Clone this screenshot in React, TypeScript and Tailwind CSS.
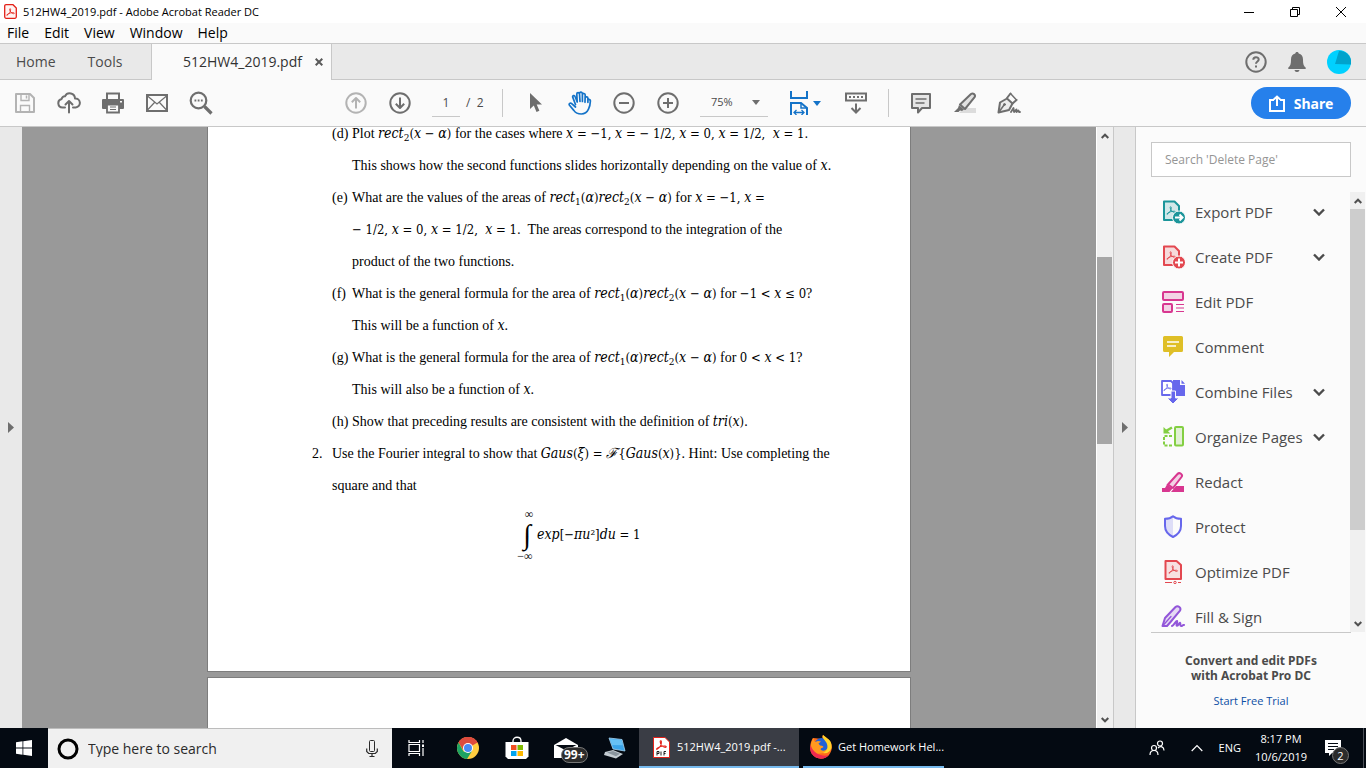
import React from "react";

type IconProps = { className?: string };

const Trefoil = ({ className }: IconProps) => (
  <path
    className={className}
    d="M1 11.5C4.500 9.800 7 6 6.800 2.200C6.700 .6 5.200 .6 5.200 2.200C5.300 5.500 8.500 9 11.600 9.200C13.400 9.200 13.200 7.700 11.600 7.500C8 7.200 4 8.500 1.600 10.300C.2 11.400 .6 12.200 1.600 11.300"
    fill="none"
    stroke="currentColor"
    strokeWidth="1.3"
    strokeLinecap="round"
  />
);

const AcrobatIcon = () => (
  <svg viewBox="0 0 13 15" className="h-[15px] w-[13px] text-[#e32119]" aria-hidden="true">
    <path d="M2 .7h7l3.300 3.300v8.800a1.500 1.500 0 0 1-1.500 1.500H2.200A1.500 1.500 0 0 1 .7 12.800V2A1.300 1.300 0 0 1 2 .7Z" fill="#fff4f3" stroke="currentColor" strokeWidth="1.3" />
    <g transform="translate(2.400 4) scale(.62)"><Trefoil /></g>
  </svg>
);

const SaveIcon = () => (
  <svg viewBox="0 0 20 20" className="size-5" fill="none" stroke="#b3b3b3" strokeWidth="2" aria-hidden="true">
    <path d="M1 1h14l4 4v14H1Z" strokeLinejoin="round" />
    <path d="M6 1v6.500h8V1M5.500 19v-6.500h9V19" strokeWidth="1.400" />
    <path d="M11.500 2.500v3" strokeWidth="1.500" />
  </svg>
);

const CloudIcon = () => (
  <svg viewBox="0 0 24 22" className="h-[22px] w-6" fill="none" stroke="#6e6e6e" strokeWidth="2" strokeLinecap="round" strokeLinejoin="round" aria-hidden="true">
    <path d="M8 15.500H5.500a4.300 4.300 0 0 1-.8-8.500 3 3 0 0 1 3.300-2.800A5.300 5.300 0 0 1 18 6.500a4.500 4.500 0 0 1 .7 9H16" />
    <path d="M12 20.500V9.500M8.500 12.500 12 9l3.500 3.500" />
  </svg>
);

const PrinterIcon = () => (
  <svg viewBox="0 0 22 22" className="size-[22px]" aria-hidden="true">
    <path d="M5 8V1.500h12V8" fill="#fafafa" stroke="#6e6e6e" strokeWidth="2" />
    <rect y="7" width="22" height="10" rx="1" fill="#6e6e6e" />
    <rect x="18" y="9" width="2" height="1.500" fill="#fafafa" />
    <path d="M5 12.500h12v8H5Z" fill="#fafafa" stroke="#6e6e6e" strokeWidth="1.800" />
    <path d="M8 15h6M8 17.500h6" stroke="#6e6e6e" strokeWidth="1.200" />
  </svg>
);

const MailIcon = () => (
  <svg viewBox="0 0 22 18" className="h-[18px] w-[22px]" fill="none" stroke="#6e6e6e" aria-hidden="true">
    <rect x="1" y="1" width="20" height="16" strokeWidth="2" />
    <path d="m1.500 2 9.500 8 9.500-8M1.500 16 8.500 8.500M20.500 16l-7-7.500" strokeWidth="1.200" />
  </svg>
);

const FindIcon = () => (
  <svg viewBox="0 0 24 24" className="size-6" fill="none" stroke="#6e6e6e" strokeWidth="2.200" aria-hidden="true">
    <circle cx="9.500" cy="9.500" r="7.800" />
    <path d="m15.500 15.500 7 7" strokeWidth="3.200" />
    <path d="M5.500 9.500h1.800M8.700 9.500h1.800M11.900 9.500h1.800" strokeWidth="1.800" />
  </svg>
);

const CircleIcon = ({ d, color }: { d: string; color: string }) => (
  <svg viewBox="0 0 22 22" className="size-[22px]" fill="none" stroke={color} strokeWidth="2" aria-hidden="true">
    <circle cx="11" cy="11" r="9.700" />
    <path d={d} strokeLinejoin="round" />
  </svg>
);

const CursorIcon = () => (
  <svg viewBox="0 0 14 22" className="h-[22px] w-[14px]" fill="#6e6e6e" aria-hidden="true">
    <path d="M1 1v16l3.800-3.500 2.700 6.500 2.900-1.200-2.700-6.300H13Z" />
  </svg>
);

const HandIcon = () => (
  <svg viewBox="0 0 24 24" className="size-6" fill="none" stroke="#1473c8" strokeWidth="1.700" strokeLinecap="round" strokeLinejoin="round" aria-hidden="true">
    <path d="M7.500 13.500 4.800 6.400c-.6-1.900 1.700-2.600 2.300-.9L9.200 11 8.800 3c0-1.900 2.500-1.900 2.700 0l.5 7.500M11.500 3c-.2-2.400 2.900-2.500 2.900-.2V10.500M14.400 3.600c.4-1.700 2.800-1.400 2.800.4L17 11.300M17.200 6.500c.7-1.200 2.700-.8 2.700.9v3.900M19.900 9c.9-1 2.600-.4 2.500 1-.1 3.200-.5 5.300-1.900 8.200-1.500 3.200-3.800 4.800-7.200 4.800-3.700 0-5.900-1.200-7.500-3.600L1.500 14.300c-1-1.600.9-2.900 2.200-1.700L7.500 16" />
  </svg>
);

const Caret = ({ color = "#6e6e6e" }: { color?: string }) => (
  <svg viewBox="0 0 8 5" className="h-[5px] w-2" fill={color} aria-hidden="true"><path d="M0 0h8L4 5Z" /></svg>
);

const FitIcon = () => (
  <svg viewBox="0 0 18 24" className="h-6 w-[18px]" fill="none" stroke="#1473c8" strokeWidth="2" aria-hidden="true">
    <path d="M1 0v7h16V0" />
    <path d="M1 24V12h10l6 5v7" />
    <path d="M11 12v5h6" strokeWidth="1.500" />
    <path d="M4 21.500h10M6.500 19 4 21.500 6.500 24M11.500 19l2.500 2.500-2.500 2.500" strokeWidth="1.300" />
  </svg>
);

const DockIcon = () => (
  <svg viewBox="0 0 22 22" className="size-[22px]" fill="none" stroke="#6e6e6e" strokeWidth="2" aria-hidden="true">
    <rect x="1" y="1.500" width="20" height="7" />
    <path d="M4 5h2M8 5h2M12 5h2M16 5h2" />
    <path d="M11 11.500v9M6.500 16l4.500 4.500 4.500-4.500" />
  </svg>
);

const CommentIcon = () => (
  <svg viewBox="0 0 20 21" className="h-[21px] w-5" stroke="#6e6e6e" strokeWidth="2" strokeLinejoin="round" aria-hidden="true">
    <path d="M1 1h18v14h-8l-4 4.500V15H1Z" fill="#e6e6e6" />
    <path d="M4.500 6h11M4.500 10h9" strokeWidth="1.300" />
  </svg>
);

const HighlightIcon = () => (
  <svg viewBox="0 0 23 22" className="h-[22px] w-[23px]" strokeLinejoin="round" aria-hidden="true">
    <path d="M10 16h12v5H5Z" fill="#dcdcdc" />
    <path d="M6 12.500 17 2c2-1.500 5 .8 3.600 3.200L11 17Z" fill="#e1e1e1" stroke="#6e6e6e" strokeWidth="2" />
    <path d="m5 13 5 4.500L8 19l-2-.5L4.500 20H0l4-4Z" fill="#6e6e6e" />
  </svg>
);

const SignIcon = () => (
  <svg viewBox="0 0 24 22" className="h-[22px] w-6" fill="none" stroke="#6e6e6e" strokeLinejoin="round" strokeLinecap="round" aria-hidden="true">
    <path d="M1.500 20.500 3 10.500 10 6.500l5.500 5-3.500 6.500Z" fill="#ececec" strokeWidth="2" />
    <path d="M10 6 13.500 1.500M15.500 11.500l4-3.500" strokeWidth="2" />
    <path d="m13.500 1.500 6 6.500" strokeWidth="1.500" />
    <path d="m2 20 5-7" strokeWidth="1.500" />
    <circle cx="7.500" cy="12.500" r="1" fill="#6e6e6e" />
    <path d="m14 20 2.500-4 .5 4 2.500-2.500v2.500l2-1.500.5 1.500H23" strokeWidth="1.800" />
  </svg>
);

const PdfPage = ({ badge }: { badge: React.ReactNode }) => (
  <svg viewBox="0 0 23 24" className="h-6 w-[23px]" aria-hidden="true">
    <path d="M2 1.500h10.500L17 6v14H2Z" fill="currentColor" fillOpacity=".18" stroke="currentColor" strokeWidth="2" strokeLinejoin="round" />
    <g transform="translate(4.500 6) scale(.7)"><Trefoil /></g>
    <circle cx="17" cy="17.500" r="6.500" fill="currentColor" stroke="#fafafa" strokeWidth="1" />
    <g stroke="#fff" strokeWidth="2" fill="none">{badge}</g>
  </svg>
);

const ExportIcon = () => <PdfPage badge={<path d="M13 17.500h7M17.500 14.500l3 3-3 3" />} />;
const CreateIcon = () => <PdfPage badge={<path d="M13 17.500h8M17 13.500v8" />} />;

const EditIcon = () => (
  <svg viewBox="0 0 22 22" className="size-[22px]" fill="none" stroke="currentColor" strokeWidth="2" aria-hidden="true">
    <rect x="1" y="1" width="20" height="8" rx="1" fill="currentColor" fillOpacity=".2" />
    <rect x="1" y="13" width="9" height="8" rx="1" fill="currentColor" fillOpacity=".2" />
    <path d="M14 13.500h8M14 17h8M14 20.500h8" strokeWidth="1.200" />
  </svg>
);

const NoteIcon = () => (
  <svg viewBox="0 0 20 21" className="h-[21px] w-5" aria-hidden="true">
    <path d="M1.500 0h17A1.500 1.500 0 0 1 20 1.500v13a1.500 1.500 0 0 1-1.500 1.500H11l-5 5v-5H1.500A1.500 1.500 0 0 1 0 14.500v-13A1.500 1.500 0 0 1 1.500 0Z" fill="currentColor" />
    <path d="M4 6h12M4 10h9" stroke="#fff" strokeWidth="1.500" />
  </svg>
);

const CombineIcon = () => (
  <svg viewBox="0 0 24 24" className="size-6" aria-hidden="true">
    <path d="M1 1h9l2 2v12H1Z" fill="#fff" stroke="currentColor" strokeWidth="1.800" strokeLinejoin="round" />
    <path d="M12 0h7v5h5v11H12ZM20.500 0 24 3.800h-3.500Z" fill="currentColor" />
    <g transform="translate(2.500 3.500) scale(.6)"><Trefoil /></g>
    <path d="M10 11h4.500v7H18l-6 6-6-6h4Z" fill="currentColor" stroke="#fafafa" strokeWidth="1" />
  </svg>
);

const OrganizeIcon = () => (
  <svg viewBox="0 0 22 21" className="h-[21px] w-[22px]" fill="none" stroke="currentColor" strokeWidth="2" aria-hidden="true">
    <rect x="13" y="1" width="8" height="18.500" rx="1" fill="currentColor" fillOpacity=".2" />
    <path d="M10 10H2v9.500h8" strokeDasharray="3 1.500" />
    <path d="M10 1.500 4 5" strokeWidth="2.500" />
    <path d="M1.500 1v6.500h7Z" fill="currentColor" stroke="none" />
  </svg>
);

const RedactIcon = () => (
  <svg viewBox="0 0 22 20" className="h-5 w-[22px]" aria-hidden="true">
    <path d="M6 12.500 15.500 2c2-2.200 5.800.5 4 3L11 16Z" fill="currentColor" fillOpacity=".2" stroke="currentColor" strokeWidth="2" />
    <path d="M14 14h8v6H9ZM5 12.500l5.500 4L7.500 20H0v-4h3Z" fill="currentColor" />
  </svg>
);

const ShieldIcon = () => (
  <svg viewBox="0 0 18 23" className="h-[23px] w-[18px]" aria-hidden="true">
    <path d="M9 1v21C4 19.500 1 16 1 11V4c3 0 6-1 8-3Z" fill="currentColor" fillOpacity=".2" />
    <path d="M9 1.200c2 1.800 5 2.600 8 2.600V11c0 5-3 8.500-8 11-5-2.500-8-6-8-11V3.800c3 0 6-.8 8-2.600Z" fill="none" stroke="currentColor" strokeWidth="2" strokeLinejoin="round" />
  </svg>
);

const OptimizeIcon = () => (
  <svg viewBox="0 0 18 24" className="h-6 w-[18px]" aria-hidden="true">
    <path d="M1.500 1h11L17 5v14H1.500Z" fill="currentColor" fillOpacity=".15" stroke="currentColor" strokeWidth="2" strokeLinejoin="round" />
    <g transform="translate(4.500 5) scale(.7)"><Trefoil /></g>
    <path d="M1 22.500h7M14 22.500h3" stroke="currentColor" />
    <circle cx="11" cy="22.500" r="1.200" fill="none" stroke="currentColor" />
  </svg>
);

const FillSignIcon = () => (
  <svg viewBox="0 0 24 23" className="h-[23px] w-6" stroke="currentColor" strokeLinejoin="round" strokeLinecap="round" aria-hidden="true">
    <path d="M1.500 21 4 13 14.500 2c2.500-2 6.300 1 4.300 3.800L9.500 17 6 21Z" fill="currentColor" fillOpacity=".2" strokeWidth="2" />
    <path d="m2 20.500 8-9" strokeWidth="1.300" />
    <path d="M11 21c2-.5 4-5.500 5-5s-1.500 4.500 0 4.800 2-3.300 3-3-.5 3 1 3.200 1.500-1.500 3-1" fill="none" strokeWidth="2" />
  </svg>
);

const Chevron = () => (
  <svg viewBox="0 0 12 8" className="h-2 w-3" fill="none" stroke="#4b4b4b" strokeWidth="2.400" aria-hidden="true"><path d="m1 1.500 5 5 5-5" /></svg>
);

const SmallChevron = ({ up = false }: { up?: boolean }) => (
  <svg viewBox="0 0 8 6" className="h-1.5 w-2" fill="none" stroke="#505050" strokeWidth="2" aria-hidden="true">
    <path d={up ? "M.7 5 4 1.700 7.300 5" : "M.7 1 4 4.300 7.300 1"} />
  </svg>
);

const tools = [
  { label: "Export PDF", Icon: ExportIcon, color: "text-[#1b959a]", more: true },
  { label: "Create PDF", Icon: CreateIcon, color: "text-[#e34850]", more: true },
  { label: "Edit PDF", Icon: EditIcon, color: "text-[#d83790]", more: false },
  { label: "Comment", Icon: NoteIcon, color: "text-[#dfbf27]", more: false },
  { label: "Combine Files", Icon: CombineIcon, color: "text-[#6767ec]", more: true },
  { label: "Organize Pages", Icon: OrganizeIcon, color: "text-[#83cf42]", more: true },
  { label: "Redact", Icon: RedactIcon, color: "text-[#d83790]", more: false },
  { label: "Protect", Icon: ShieldIcon, color: "text-[#6767ec]", more: false },
  { label: "Optimize PDF", Icon: OptimizeIcon, color: "text-[#e34850]", more: false },
  { label: "Fill & Sign", Icon: FillSignIcon, color: "text-[#9256d9]", more: false },
];

const TitleBar = () => (
  <header className="flex h-[23px] shrink-0 items-center bg-white pr-0.5 pl-1 text-black">
    <AcrobatIcon />
    <h1 className="ml-1.5 text-[11px] leading-4">512HW4_2019.pdf - Adobe Acrobat Reader DC</h1>
    <div className="ml-auto flex">
      <button type="button" aria-label="Minimize" className="flex h-5 w-[46px] items-center justify-center">
        <svg viewBox="0 0 10 10" className="size-2.5" stroke="#000"><path d="M0 5.500h10" /></svg>
      </button>
      <button type="button" aria-label="Restore" className="flex h-5 w-[46px] items-center justify-center">
        <svg viewBox="0 0 10 10" className="size-2.5" stroke="#000" fill="none"><path d="M.5 2.500h7v7h-7ZM2.500 2.500v-2h7v7h-2" /></svg>
      </button>
      <button type="button" aria-label="Close" className="flex h-5 w-[46px] items-center justify-center">
        <svg viewBox="0 0 10 10" className="size-2.5" stroke="#000"><path d="m0 0 10 10M10 0 0 10" /></svg>
      </button>
    </div>
  </header>
);

const MenuBar = () => (
  <nav aria-label="Menu" className="flex h-5 shrink-0 items-center gap-[15px] bg-[#fafafa] pl-[7px] text-[14px] leading-5 text-black">
    {["File", "Edit", "View", "Window", "Help"].map((m) => (
      <button type="button" key={m}>{m}</button>
    ))}
  </nav>
);

const TabBar = () => (
  <div className="flex h-[37px] shrink-0 border-y border-[#c8c8c8] bg-[#e9e9e9] text-[14px] leading-5 text-[#4b4b4b]">
    <div className="flex w-[151px] items-center gap-8 pl-4">
      <button type="button">Home</button>
      <button type="button">Tools</button>
    </div>
    <div className="-mb-px flex w-[181px] items-center justify-between border-x border-[#c8c8c8] bg-[#fafafa] pr-2 pl-[31px]">
      <button type="button" className="text-[#323232]">512HW4_2019.pdf</button>
      <button type="button" aria-label="Close tab">
        <svg viewBox="0 0 8 8" className="size-2" stroke="#5a5a5a" strokeWidth="2"><path d="m.7.7 6.600 6.600M7.300.7.7 7.300" /></svg>
      </button>
    </div>
    <div className="ml-auto flex items-center gap-[21px] pr-[15px]">
      <button type="button" aria-label="Help">
        <svg viewBox="0 0 22 22" className="size-[22px]" fill="none" stroke="#6e6e6e" strokeWidth="2">
          <circle cx="11" cy="11" r="9.700" />
          <path d="M8.300 8.800c0-3.400 5.400-3.400 5.400-.3 0 2-2.700 1.900-2.700 4.200M11 14.500v2" />
        </svg>
      </button>
      <button type="button" aria-label="Notifications">
        <svg viewBox="0 0 18 20" className="h-5 w-[18px]" fill="#6e6e6e">
          <path d="M9 0c1 0 1.700.6 1.700 1.600C13.500 2.300 15 4.500 15 7.500c0 4.500.7 6.500 2.700 8V17H.3v-1.500c2-1.500 2.700-3.500 2.700-8 0-3 1.500-5.200 4.300-5.900C7.300.6 8 0 9 0ZM6.500 18h5c-.5 2.700-4.500 2.700-5 0Z" />
        </svg>
      </button>
      <button type="button" aria-label="Account">
        <svg viewBox="0 0 24 24" className="size-6"><circle cx="12" cy="12" r="12" fill="#00d1ff" /><path d="M12 1h2a11.500 11.500 0 0 1 10 13.500L8 14Z" fill="#00a3cc" /></svg>
      </button>
    </div>
  </div>
);

const ToolButton = ({ label, children }: { label: string; children: React.ReactNode }) => (
  <button type="button" aria-label={label} className="flex h-11 w-11 items-center justify-center">{children}</button>
);

const Toolbar = () => (
  <div className="flex h-[47px] shrink-0 items-center border-b border-[#c8c8c8] bg-[#fafafa] pl-[3px] text-[12px] text-[#4b4b4b]">
    <ToolButton label="Save"><SaveIcon /></ToolButton>
    <ToolButton label="Upload"><CloudIcon /></ToolButton>
    <ToolButton label="Print"><PrinterIcon /></ToolButton>
    <ToolButton label="Email"><MailIcon /></ToolButton>
    <ToolButton label="Find"><FindIcon /></ToolButton>
    <div className="ml-[111px] flex items-center">
      <ToolButton label="Previous page"><CircleIcon color="#b3b3b3" d="M11 16.500V6M6.800 10.200 11 6l4.200 4.200" /></ToolButton>
      <ToolButton label="Next page"><CircleIcon color="#6e6e6e" d="M11 5.500V16M6.800 11.800 11 16l4.200-4.200" /></ToolButton>
      <input aria-label="Page number" defaultValue="1" className="ml-2.5 h-[27px] w-7 border-b border-[#c8c8c8] bg-transparent text-center" />
      <span className="ml-1.5 w-9">/&nbsp; 2</span>
      <span className="mr-[11px] h-7 w-px bg-[#c8c8c8]" />
      <ToolButton label="Select"><CursorIcon /></ToolButton>
      <ToolButton label="Hand"><HandIcon /></ToolButton>
      <ToolButton label="Zoom out"><CircleIcon color="#6e6e6e" d="M6 11h10" /></ToolButton>
      <ToolButton label="Zoom in"><CircleIcon color="#6e6e6e" d="M6 11h10M11 6v10" /></ToolButton>
      <div className="ml-2.5 flex h-[27px] w-[68px] items-center border-b border-[#c8c8c8] pr-2">
        <select aria-label="Zoom level" defaultValue="75%" className="min-w-0 flex-1 appearance-none bg-transparent pl-[11px] text-[11px]">
          <option>75%</option>
        </select>
        <Caret />
      </div>
      <button type="button" aria-label="Fit page" className="ml-[22px] flex items-center gap-[5px]"><FitIcon /><Caret color="#1473c8" /></button>
      <button type="button" aria-label="Dock toolbar" className="ml-6"><DockIcon /></button>
      <span className="mr-2.5 ml-[21px] h-7 w-px bg-[#c8c8c8]" />
      <ToolButton label="Add comment"><CommentIcon /></ToolButton>
      <ToolButton label="Highlight"><HighlightIcon /></ToolButton>
      <ToolButton label="Sign"><SignIcon /></ToolButton>
    </div>
    <button type="button" className="mr-[15px] ml-auto flex h-8 w-[100px] items-center justify-center gap-[9px] rounded-full bg-[#2680eb] font-['Noto_Sans',sans-serif] text-[14px] font-bold text-white">
      <svg viewBox="0 0 16 17" className="h-[17px] w-4" fill="none" stroke="#fff" strokeWidth="2"><path d="M5 5H1v11h14V5h-4M8 11V1.500M4.800 4.500 8 1.500l3.200 3" /></svg>
      Share
    </button>
  </div>
);

const M = ({ children }: { children: React.ReactNode }) => <i className="font-['DejaVu_Serif_Condensed','DejaVu_Serif',serif] text-[14px] leading-none">{children}</i>;
const Up = ({ children }: { children: React.ReactNode }) => <span className="font-['DejaVu_Serif_Condensed','DejaVu_Serif',serif] text-[13px] leading-none not-italic">{children}</span>;
const Sub = ({ n }: { n: string }) => <span className="relative top-[3px] text-[10px] leading-none not-italic">{n}</span>;
const X = () => <M>x</M>;
const Rect = ({ n }: { n: string }) => <M>rect<Sub n={n} /></M>;
const Shift = () => <M><Up>(</Up>x<Up> − </Up>α<Up>)</Up></M>;
const Product = () => <><Rect n="1" /><M><Up>(</Up>α<Up>)</Up></M><Rect n="2" /><Shift /></>;

const Item = ({ mark, children }: { mark: string; children: React.ReactNode }) => (
  <li className="grid grid-cols-[20px_1fr]">
    <span>{mark}</span>
    <div>{children}</div>
  </li>
);

const Document = () => (
  <article className="flex h-[544px] w-[702px] max-w-full shrink-0 flex-col overflow-hidden bg-white pl-[104px] font-['Liberation_Serif',serif] text-[14px] leading-8 whitespace-nowrap text-black shadow-[0_0_0_1px_#7d7d7d]">
    <ol className="-mt-[9px] pl-5">
      <Item mark="(d)">
        <p>Plot <Rect n="2" /><Shift /> for the cases where <X /><Up> = −1, </Up><X /><Up> = − 1/2, </Up><X /><Up> = 0, </Up><X /><Up> = 1/2,&nbsp; </Up><X /><Up> = 1.</Up></p>
        <p>This shows how the second functions slides horizontally depending on the value of <X />.</p>
      </Item>
      <Item mark="(e)">
        <p>What are the values of the areas of <Product /> for <X /><Up> = −1, </Up><X /><Up> =</Up></p>
        <p><Up>− 1/2, </Up><X /><Up> = 0, </Up><X /><Up> = 1/2,&nbsp; </Up><X /><Up> = 1.</Up>&nbsp; The areas correspond to the integration of the</p>
        <p>product of the two functions.</p>
      </Item>
      <Item mark="(f)">
        <p>What is the general formula for the area of <Product /> for <Up>−1 &lt; </Up><X /><Up> ≤ 0</Up>?</p>
        <p>This will be a function of <X />.</p>
      </Item>
      <Item mark="(g)">
        <p>What is the general formula for the area of <Product /> for <Up>0 &lt; </Up><X /><Up> &lt; 1</Up>?</p>
        <p>This will also be a function of <X />.</p>
      </Item>
      <Item mark="(h)">
        <p>Show that preceding results are consistent with the definition of <M>tri<Up>(</Up>x<Up>)</Up></M>.</p>
      </Item>
    </ol>
    <div className="grid grid-cols-[20px_1fr]">
      <span>2.</span>
      <div>
        <p>Use the Fourier integral to show that <M>Gaus<Up>(</Up>ξ<Up>) = </Up>ℱ<Up>{"{"}</Up>Gaus<Up>(</Up>x<Up>)</Up><Up>{"}"}</Up></M>. Hint: Use completing the</p>
        <p>square and that</p>
      </div>
    </div>
    <div className="mt-1.5 ml-[205px] flex items-center">
      <div className="flex w-5 flex-col items-center text-[12px] leading-[12px]">
        <span className="pl-1">∞</span>
        <span className="text-[28px] leading-[30px]">∫</span>
        <span className="pr-1">−∞</span>
      </div>
      <p><M>exp<Up>[−</Up>πu<Up>²]</Up>du<Up> = 1</Up></M></p>
    </div>
  </article>
);

const ScrollBar = ({ thumb, label }: { thumb: string; label: string }) => (
  <div role="group" aria-label={label} className="flex w-[15px] shrink-0 flex-col bg-[#f0f0f0]">
    <button type="button" aria-label="Scroll up" className="flex h-[17px] shrink-0 items-center justify-center"><SmallChevron up /></button>
    <div className="min-h-0 flex-1"><div className={thumb} /></div>
    <button type="button" aria-label="Scroll down" className="flex h-[17px] shrink-0 items-center justify-center"><SmallChevron /></button>
  </div>
);

const ToolsPane = () => (
  <aside className="flex w-[231px] shrink-0 flex-col border-l border-[#c8c8c8] bg-[#fbfbfb] text-[#4b4b4b]">
    <input type="search" aria-label="Search tools" placeholder="Search 'Delete Page'" className="mx-[15px] mt-[15px] h-[35px] shrink-0 border border-[#c8c8c8] bg-white px-[13px] text-[12px] placeholder:text-[#959595]" />
    <div className="mt-3 flex min-h-0 flex-1">
      <ul className="min-w-0 flex-1 overflow-hidden pl-6">
        {tools.map(({ label, Icon, color, more }) => (
          <li key={label}>
            <button type="button" className="flex h-[45px] w-full items-center pr-[25px] text-[15px] leading-5 whitespace-nowrap">
              <span className={`flex w-[26px] justify-center ${color}`}><Icon /></span>
              <span className="ml-[9px]">{label}</span>
              {more && <span className="ml-auto"><Chevron /></span>}
            </button>
          </li>
        ))}
      </ul>
      <div className="mr-px flex pt-[3px]">
        <ScrollBar label="Tools scroll bar" thumb="h-[79%] bg-[#cdcdcd]" />
      </div>
    </div>
    <div className="mx-[15px] flex h-24 shrink-0 flex-col items-center border-t border-[#c8c8c8] pt-5 text-center">
      <p className="w-[160px] font-['Noto_Sans',sans-serif] text-[12px] leading-[15px] font-bold">Convert and edit PDFs with Acrobat Pro DC</p>
      <a href="#trial" className="mt-2.5 text-[11px] leading-[16px] text-[#0d4fa5]">Start Free Trial</a>
    </div>
  </aside>
);

const SideHandle = ({ label }: { label: string }) => (
  <button type="button" aria-label={label} className="flex w-full items-center justify-center bg-[#e9e9e9]">
    <svg viewBox="0 0 6 11" className="h-[11px] w-1.5" fill="#6e6e6e"><path d="M0 0v11l6-5.500Z" /></svg>
  </button>
);

const ChromeIcon = () => (
  <svg viewBox="0 0 22 22" className="size-[22px]" aria-hidden="true">
    <circle cx="11" cy="11" r="11" fill="#ffcd40" />
    <path d="M11 11 1.500 5.500A11 11 0 0 1 20.500 5.500Z" fill="#dd4b3e" />
    <path d="M11 6h9.800A11 11 0 0 0 1.500 5.500L6.500 13.500Z" fill="#dd4b3e" />
    <path d="M1.500 5.500A11 11 0 0 0 10 22l5-8-8.500.5Z" fill="#1da362" />
    <circle cx="11" cy="11" r="5" fill="#fff" />
    <circle cx="11" cy="11" r="4" fill="#4a8af4" />
  </svg>
);

const StoreIcon = () => (
  <svg viewBox="0 0 24 24" className="size-6" aria-hidden="true">
    <path d="M8 8V5c0-5 8-5 8 0v3" fill="none" stroke="#fff" strokeWidth="1.300" />
    <path d="M.5 6h23v14.500L21 23H3L.5 20.500Z" fill="#fff" />
    <path d="M6 9h5.500v5H6Z" fill="#f25022" /><path d="M12.500 9H18v5h-5.500Z" fill="#7fba00" />
    <path d="M6 15h5.500v5H6Z" fill="#00a4ef" /><path d="M12.500 15H18v5h-5.500Z" fill="#ffb900" />
  </svg>
);

const PcIcon = () => (
  <svg viewBox="0 0 23 22" className="h-[22px] w-[23px]" aria-hidden="true">
    <path d="m6 1 13 1.500 3 11.500L10 12Z" fill="#3ba5ea" stroke="#a6d4f2" strokeWidth=".8" />
    <path d="m7 2 11.500 1.300 1.300 5L9 8Z" fill="#67c1f5" />
    <path d="m2 15 8-2 10 4-7 4.500L1 18Z" fill="#c4ccd2" />
    <path d="m4 15.500 6-1.500 7 2.700-4 2.500Z" fill="#8a959e" />
  </svg>
);

const FirefoxIcon = () => (
  <svg viewBox="0 0 22 24" className="h-6 w-[22px] shrink-0" aria-hidden="true">
    <path d="M3 3C0 7-1 15 2 19c4 6 13 6 17 1 4-5 4-12-1-16l-5-4c-1 1-1 3 0 4Z" fill="#ff6a1c" />
    <circle cx="11.500" cy="10" r="7" fill="#1f62d6" />
    <path d="M3 3 1 9c0 6 2 9 5 10l8-1c2-1 3-3 3-4-2 2-4 2-6 1-1-1 0-2 2-2.500 1-.5 0-2-3-2l-1.500-2L11 6.500 8 6l-3 1Z" fill="#ff9a1f" />
    <path d="M13 0c-1 3 1 4 3 7 3 5 1 9-3 11 4 1 7-1 8.500-5C22 8 20 5 18 4Z" fill="#ffd52b" />
    <path d="M.5 10c-.6 4 0 7 1.500 9 4 6 13 6 17 1-6 2-15 0-18.500-10Z" fill="#ee2a50" />
  </svg>
);

const TaskButton = ({ label, children }: { label: string; children: React.ReactNode }) => (
  <button type="button" aria-label={label} className="flex h-10 w-[49px] items-center justify-center">{children}</button>
);

const TaskBar = () => (
  <footer className="flex h-10 shrink-0 items-center bg-[#040a12] text-[11px] leading-4 text-white">
    <button type="button" aria-label="Start" className="flex h-10 w-12 items-center justify-center">
      <svg viewBox="0 0 16 16" className="size-4" fill="#fff"><path d="M0 2.200 6.500 1.300v6.200H0ZM7.300 1.200 16 0v7.500H7.300ZM0 8.400h6.500v6.300L0 13.800ZM7.300 8.400H16V16l-8.700-1.200Z" /></svg>
    </button>
    <label className="flex h-10 w-[344px] items-center border-t border-[#bcbcbc] bg-[#f0f0f0] pr-[14px] pl-[9px]">
      <svg viewBox="0 0 22 22" className="size-[22px] shrink-0" fill="none" stroke="#000" strokeWidth="3" aria-hidden="true"><circle cx="11" cy="11" r="9" /></svg>
      <input aria-label="Type here to search" placeholder="Type here to search" className="ml-[9px] min-w-0 flex-1 bg-transparent text-[14px] text-black placeholder:text-[#2b2b2b]" />
      <svg viewBox="0 0 12 17" className="h-[17px] w-3 shrink-0" fill="none" stroke="#2b2b2b" aria-hidden="true"><rect x="3.500" y=".5" width="5" height="11" rx="1" /><path d="M.7 8.500v3l2 2h6.600l2-2v-3M6 13.500v3M3.500 16.500h5" strokeWidth="1.200" /></svg>
    </label>
    <TaskButton label="Task view">
      <svg viewBox="0 0 17 16" className="h-4 w-[17px]" fill="none" stroke="#fff" strokeWidth="1.200"><path d="M1 0v2.500h10.500V0M1 16v-2.500h10.500V16M1 4.500h10.500v7H1ZM15 0v3M15 8v8" /><path d="M14 4.500h2v2.500h-2Z" fill="#fff" stroke="none" /></svg>
    </TaskButton>
    <div className="flex pl-0.5">
      <TaskButton label="Chrome"><ChromeIcon /></TaskButton>
      <TaskButton label="Microsoft Store"><StoreIcon /></TaskButton>
      <button type="button" aria-label="Mail" className="relative flex h-10 w-[49px] items-center justify-center">
        <svg viewBox="0 0 24 20" className="h-5 w-6"><path d="M0 7 12 0l12 7v13H0Z" fill="#fff" /><path d="m1.500 7 21 0L12 12.500Z" fill="#040a12" /></svg>
        <span className="absolute top-[19px] left-5 rounded-full border border-[#777] bg-[#2c2c2c] px-0.5 text-[12px] leading-[14px] font-bold">99+</span>
      </button>
      <TaskButton label="This PC"><PcIcon /></TaskButton>
    </div>
    <button type="button" className="flex h-10 w-40 items-center border-b-2 border-[#76b9ed] bg-[#3a3d45] pl-[13px]">
      <svg viewBox="0 0 18 21" className="h-[21px] w-[18px] text-[#e32119]" aria-hidden="true">
        <path d="M1.500.5H13l4.500 4.500v15.500h-16Z" fill="#fff" stroke="#e32119" />
        <g transform="translate(4 3) scale(.8)"><Trefoil /></g>
        <path d="M5 18.500v-4h2v2H5M9 14.500v4M12 18.500v-4h2M12 16.500h1.500" fill="none" stroke="#222" />
      </svg>
      <span className="ml-[7px]">512HW4_2019.pdf -...</span>
    </button>
    <button type="button" className="ml-1 flex h-10 w-[141px] items-center border-b-2 border-[#76b9ed] pl-[7px] whitespace-nowrap">
      <FirefoxIcon />
      <span className="ml-1.5">Get Homework Hel...</span>
    </button>
    <div className="ml-auto flex items-center">
      <button type="button" aria-label="People">
        <svg viewBox="0 0 16 16" className="size-4" fill="none" stroke="#fff" strokeWidth="1.200"><circle cx="5" cy="8" r="2.500" /><circle cx="11" cy="3.500" r="2.500" /><path d="M1 15c0-6 8-6 8 0M9 8c2.500-2.500 6-1.500 6 2.500" /></svg>
      </button>
      <button type="button" aria-label="Show hidden icons" className="ml-[26px]">
        <svg viewBox="0 0 12 8" className="h-2 w-3" fill="none" stroke="#fff" strokeWidth="1.200"><path d="m.7 7 5.300-5.500L11.300 7" /></svg>
      </button>
      <span className="ml-4">ENG</span>
      <time className="ml-3 w-14 text-center leading-[18px] whitespace-nowrap">8:17 PM<br />10/6/2019</time>
      <button type="button" aria-label="2 notifications" className="relative ml-4 flex h-10 w-6 items-center">
        <svg viewBox="0 0 16 16" className="size-4"><path d="M0 0h16v13H7l-3 3v-3H0Z" fill="#fff" /><path d="M3 3.500h10M3 6.500h10M3 9.500h6" stroke="#040a12" strokeWidth="1.200" /></svg>
        <span className="absolute top-[19px] left-[7px] flex size-[17px] items-center justify-center rounded-full border border-[#777] bg-[#2c2c2c]">2</span>
      </button>
      <span className="ml-[14px] h-10 w-[3px] border-l border-[#4c5058]" />
    </div>
  </footer>
);

export default function App() {
  return (
    <div className="flex h-screen flex-col overflow-hidden font-['Open_Sans','Noto_Sans',sans-serif]">
      <TitleBar />
      <MenuBar />
      <TabBar />
      <Toolbar />
      <div className="flex min-h-0 flex-1">
        <div className="flex w-[22px] shrink-0"><SideHandle label="Show navigation pane" /></div>
        <main className="flex min-w-0 flex-1 flex-col items-center gap-[7px] overflow-hidden bg-[#999999]">
          <Document />
          <div className="w-[702px] max-w-full flex-1 bg-white shadow-[0_0_0_1px_#7d7d7d]" />
        </main>
        <div className="flex border-r border-l border-r-[#c8c8c8] border-l-white">
          <ScrollBar label="Document scroll bar" thumb="mt-[113px] h-[187px] bg-[#a6a6a6]" />
          <span className="w-px bg-[#f0f0f0]" />
        </div>
        <div className="flex w-[21px] shrink-0"><SideHandle label="Hide tools pane" /></div>
        <ToolsPane />
      </div>
      <TaskBar />
    </div>
  );
}
